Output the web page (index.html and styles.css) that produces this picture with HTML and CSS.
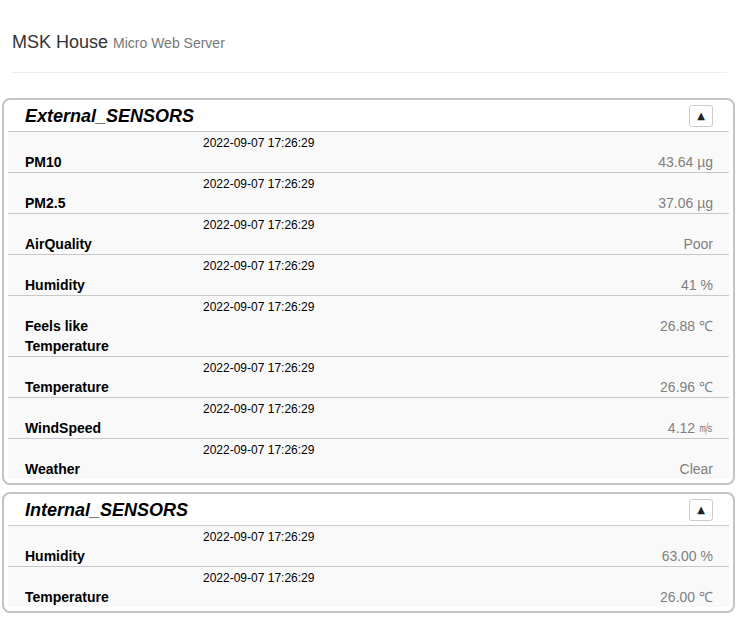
FILE: index.html
```html
<!DOCTYPE html>
<html>
<head>
<meta charset="utf-8">
<link rel="stylesheet" href="styles.css">
</head>
<body>
<div class="page-header">
  <h1 class="title">MSK House <small class="subtitle">Micro Web Server</small></h1>
</div>

<section class="group">
  <div class="group-head">
    <span class="group-title">External_SENSORS</span>
    <button class="toggle">&#9650;</button>
  </div>
  <div class="rows">
    <div class="row"><div class="ts">2022-09-07 17:26:29</div><div class="label">PM10</div><div class="value">43.64 µg</div></div>
    <div class="row"><div class="ts">2022-09-07 17:26:29</div><div class="label">PM2.5</div><div class="value">37.06 µg</div></div>
    <div class="row"><div class="ts">2022-09-07 17:26:29</div><div class="label">AirQuality</div><div class="value">Poor</div></div>
    <div class="row"><div class="ts">2022-09-07 17:26:29</div><div class="label">Humidity</div><div class="value">41 %</div></div>
    <div class="row"><div class="ts">2022-09-07 17:26:29</div><div class="label">Feels like Temperature</div><div class="value">26.88 ℃</div></div>
    <div class="row"><div class="ts">2022-09-07 17:26:29</div><div class="label">Temperature</div><div class="value">26.96 ℃</div></div>
    <div class="row"><div class="ts">2022-09-07 17:26:29</div><div class="label">WindSpeed</div><div class="value">4.12 ㎧</div></div>
    <div class="row"><div class="ts">2022-09-07 17:26:29</div><div class="label">Weather</div><div class="value">Clear</div></div>
  </div>
</section>

<section class="group">
  <div class="group-head">
    <span class="group-title">Internal_SENSORS</span>
    <button class="toggle">&#9650;</button>
  </div>
  <div class="rows">
    <div class="row"><div class="ts">2022-09-07 17:26:29</div><div class="label">Humidity</div><div class="value">63.00 %</div></div>
    <div class="row"><div class="ts">2022-09-07 17:26:29</div><div class="label">Temperature</div><div class="value">26.00 ℃</div></div>
  </div>
</section>
</body>
</html>
```
FILE: styles.css
```css
html, body {
  margin: 0;
  padding: 0;
  background: #fff;
  font-family: "Liberation Sans", Arial, sans-serif;
  color: #000;
}

.page-header {
  margin: 0 12px 25px 12px;
  padding-top: 31px;
  padding-bottom: 18px;
  border-bottom: 1px solid #eee;
}

.title {
  margin: 0;
  font-size: 18px;
  font-weight: normal;
  line-height: 22px;
  color: #333;
}

.subtitle {
  font-size: 14px;
  color: #777;
}

.group {
  margin: 0 4px 7px 2px;
  border: 2px solid #c4c4c4;
  border-radius: 8px;
  padding: 0 4px 4px 4px;
}

.group-head {
  display: flex;
  align-items: center;
  justify-content: space-between;
  height: 30px;
  padding: 1px 16px 0 17px;
  border-bottom: 1px solid #c8c8c8;
}

.group-title {
  font-size: 18px;
  font-weight: bold;
  font-style: italic;
  line-height: 22px;
}

.toggle {
  width: 24px;
  height: 22px;
  padding: 0;
  margin: 0;
  border: 1px solid #ccc;
  border-radius: 3px;
  background: #fff;
  font-size: 10px;
  line-height: 20px;
  color: #222;
  font-family: "DejaVu Sans", sans-serif;
}

.rows {
  background: #f9f9f9;
}

.row {
  display: grid;
  grid-template-columns: 178px 1fr auto;
  padding: 4px 16px 0 17px;
  border-bottom: 1px solid #c8c8c8;
}

.row:last-child {
  border-bottom: none;
}

.ts {
  grid-column: 2;
  grid-row: 1;
  font-size: 12px;
  line-height: 14px;
  margin-bottom: 2px;
}

.label {
  grid-column: 1;
  grid-row: 2;
  max-width: 130px;
  font-size: 14px;
  font-weight: bold;
  line-height: 20px;
}

.value {
  grid-column: 3;
  grid-row: 2;
  align-self: start;
  font-size: 14px;
  line-height: 20px;
  color: #808080;
  text-align: right;
}
```
